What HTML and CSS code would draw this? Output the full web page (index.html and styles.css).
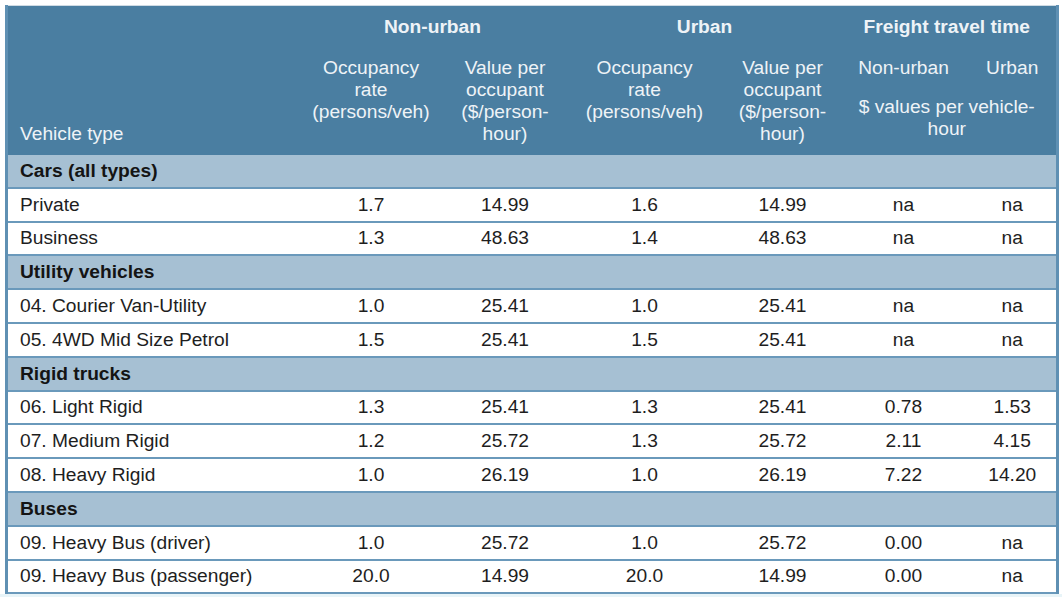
FILE: index.html
```html
<!DOCTYPE html>
<html lang="en">
<head>
<meta charset="utf-8">
<title>Vehicle occupancy and travel time values</title>
<link rel="stylesheet" href="styles.css">
</head>
<body>
<div class="page">
  <table class="vt">
    <colgroup>
      <col class="c1"><col class="c2"><col class="c3"><col class="c4"><col class="c5"><col class="c6"><col class="c7">
    </colgroup>
    <thead>
      <tr class="h1">
        <th rowspan="3" class="vtype">Vehicle type</th>
        <th colspan="2" class="group">Non-urban</th>
        <th colspan="2" class="group">Urban</th>
        <th colspan="2" class="group">Freight travel time</th>
      </tr>
      <tr class="h2">
        <th rowspan="2" class="sub">Occupancy<br>rate<br>(persons/veh)</th>
        <th rowspan="2" class="sub">Value per<br>occupant<br>($/person-<br>hour)</th>
        <th rowspan="2" class="sub">Occupancy<br>rate<br>(persons/veh)</th>
        <th rowspan="2" class="sub">Value per<br>occupant<br>($/person-<br>hour)</th>
        <th class="sub fsub">Non-urban</th>
        <th class="sub fsub last">Urban</th>
      </tr>
      <tr class="h3">
        <th colspan="2" class="units">$ values per vehicle-<br>hour</th>
      </tr>
    </thead>
    <tbody>
      <tr class="sec"><td colspan="7">Cars (all types)</td></tr>
      <tr><td>Private</td><td>1.7</td><td>14.99</td><td>1.6</td><td>14.99</td><td>na</td><td>na</td></tr>
      <tr><td>Business</td><td>1.3</td><td>48.63</td><td>1.4</td><td>48.63</td><td>na</td><td>na</td></tr>
      <tr class="sec"><td colspan="7">Utility vehicles</td></tr>
      <tr><td>04. Courier Van-Utility</td><td>1.0</td><td>25.41</td><td>1.0</td><td>25.41</td><td>na</td><td>na</td></tr>
      <tr><td>05. 4WD Mid Size Petrol</td><td>1.5</td><td>25.41</td><td>1.5</td><td>25.41</td><td>na</td><td>na</td></tr>
      <tr class="sec"><td colspan="7">Rigid trucks</td></tr>
      <tr><td>06. Light Rigid</td><td>1.3</td><td>25.41</td><td>1.3</td><td>25.41</td><td>0.78</td><td>1.53</td></tr>
      <tr><td>07. Medium Rigid</td><td>1.2</td><td>25.72</td><td>1.3</td><td>25.72</td><td>2.11</td><td>4.15</td></tr>
      <tr><td>08. Heavy Rigid</td><td>1.0</td><td>26.19</td><td>1.0</td><td>26.19</td><td>7.22</td><td>14.20</td></tr>
      <tr class="sec"><td colspan="7">Buses</td></tr>
      <tr><td>09. Heavy Bus (driver)</td><td>1.0</td><td>25.72</td><td>1.0</td><td>25.72</td><td>0.00</td><td>na</td></tr>
      <tr><td>09. Heavy Bus (passenger)</td><td>20.0</td><td>14.99</td><td>20.0</td><td>14.99</td><td>0.00</td><td>na</td></tr>
    </tbody>
  </table>
  <div class="strip"></div>
</div>
</body>
</html>
```

FILE: styles.css
```css
html, body {
  margin: 0;
  padding: 0;
  background: #ffffff;
}

.page {
  padding: 5px 4px 0 5px;
  font-family: "Liberation Sans", Arial, sans-serif;
  font-size: 19.2px;
  line-height: 22px;
  color: #1e1e1e;
}

.vt {
  width: 1053px;
  border-collapse: collapse;
  table-layout: fixed;
  border-top: 1px solid #cfdbe4;
  border-left: 3px solid #5f90b3;
  border-right: 3px solid #5f90b3;
}

.c1 { width: 297px; }
.c2 { width: 135px; }
.c3 { width: 133px; }
.c4 { width: 146px; }
.c5 { width: 130px; }
.c6 { width: 112px; }
.c7 { width: 98px; }

.vt thead th {
  background: #4a7ea1;
  color: #eef3f7;
  font-weight: normal;
  padding: 0;
  text-align: center;
  vertical-align: top;
}

.vt thead .group {
  font-weight: bold;
  padding: 10px 10px 10px 0;
  vertical-align: middle;
}

.vt thead .vtype {
  text-align: left;
  vertical-align: bottom;
  padding: 0 0 10px 12px;
}

.vt thead .sub {
  padding: 9px 0 0 0;
}

.vt thead .fsub {
  padding: 9px 0 8px 0;
}

.vt thead .fsub.last {
  padding-left: 9px;
}

.vt thead .units {
  padding: 9px 10px 15px 0;
}

.vt tbody td {
  height: 31.8px;
  padding: 0;
  text-align: center;
  vertical-align: middle;
  border-bottom: 2px solid #6a99bb;
  background: #ffffff;
}

.vt tbody td:first-child {
  text-align: left;
  padding-left: 12px;
}

.vt tbody td:nth-child(7) {
  padding-left: 9px;
}

.vt tbody tr.sec td {
  background: #a6c0d3;
  font-weight: bold;
  color: #141414;
}

.strip {
  height: 10px;
  margin: 0 -4px 0 -5px;
  background: #e8f4f8;
}
```
